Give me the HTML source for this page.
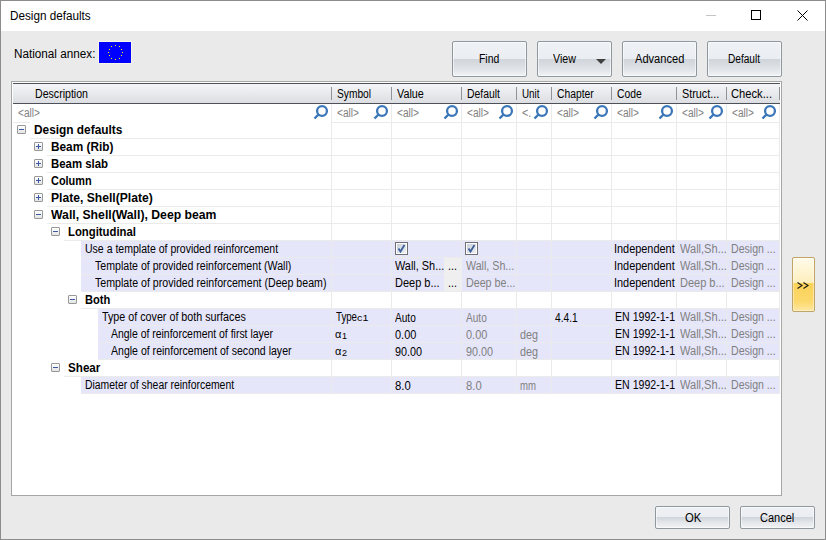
<!DOCTYPE html>
<html><head><meta charset="utf-8"><style>
html,body{margin:0;padding:0;width:826px;height:540px;overflow:hidden;background:#eaeaea}
body div, body svg{position:absolute}
.t{white-space:nowrap;font-family:"Liberation Sans", sans-serif}
.btn{border:1px solid #8f989e;border-radius:2px;box-sizing:border-box;box-shadow:inset 0 0 0 1px rgba(255,255,255,.55)}
.exp{width:9px;height:9px;box-sizing:border-box;border:1px solid #989898;border-radius:1px;background:linear-gradient(#fff,#e4e4e4)}
</style></head><body>
<div style="left:0px;top:0px;width:826px;height:540px;background:#eaeaea"></div>
<div style="left:0px;top:0px;width:826px;height:31px;background:#fff"></div>
<div style="left:0px;top:0px;width:826px;height:1px;background:#8c8c8c"></div>
<div style="left:0px;top:539px;width:826px;height:1px;background:#8c8c8c"></div>
<div style="left:0px;top:0px;width:1px;height:540px;background:#8c8c8c"></div>
<div style="left:825px;top:0px;width:1px;height:540px;background:#8c8c8c"></div>
<div class="t" style="left:10.00px;top:9px;color:#000;font-size:12px;line-height:14px;transform:scaleX(0.9759);transform-origin:0 0;">Design defaults</div>
<div style="left:706px;top:15px;width:10px;height:1px;background:#c4c4c4"></div>
<div style="left:751px;top:10px;width:10px;height:10px;border:1px solid #000;box-sizing:border-box"></div>
<svg style="position:absolute;left:797px;top:10px" width="11" height="11"><path d="M0.5 0.5 L10.5 10.5 M10.5 0.5 L0.5 10.5" stroke="#000" stroke-width="1"/></svg>
<div class="t" style="left:14.00px;top:47px;color:#000;font-size:12px;line-height:14px;transform:scaleX(0.9759);transform-origin:0 0;">National annex:</div>
<div style="left:98px;top:41px;width:34px;height:23px;background:#f6f6ea"></div>
<div style="left:99px;top:42px;width:32px;height:21px;background:#0000ff"></div>
<svg style="position:absolute;left:99px;top:42px" width="32" height="21"><rect x="16" y="3" width="1" height="1" fill="#ffff00"/><rect x="12" y="4" width="1" height="1" fill="#ffff00"/><rect x="20" y="4" width="1" height="1" fill="#ffff00"/><rect x="10" y="7" width="1" height="1" fill="#ffff00"/><rect x="22" y="7" width="1" height="1" fill="#ffff00"/><rect x="9" y="10" width="1" height="1" fill="#ffff00"/><rect x="23" y="10" width="1" height="1" fill="#ffff00"/><rect x="10" y="13" width="1" height="1" fill="#ffff00"/><rect x="22" y="13" width="1" height="1" fill="#ffff00"/><rect x="12" y="16" width="1" height="1" fill="#ffff00"/><rect x="20" y="16" width="1" height="1" fill="#ffff00"/><rect x="16" y="17" width="1" height="1" fill="#ffff00"/></svg>
<div class="btn" style="left:452px;top:41px;width:75px;height:36px;background:linear-gradient(to bottom,#eff1f5 0,#eaedf1 17px,#cfd4da 17px,#e2e5e9 28px,#f1f3f5 100%)"></div>
<div class="t" style="left:479.00px;top:52px;color:#000;font-size:12px;line-height:14px;transform:scaleX(0.8696);transform-origin:0 0;">Find</div>
<div class="btn" style="left:537px;top:41px;width:75px;height:36px;background:linear-gradient(to bottom,#eff1f5 0,#eaedf1 17px,#cfd4da 17px,#e2e5e9 28px,#f1f3f5 100%)"></div>
<div class="t" style="left:553.00px;top:52px;color:#000;font-size:12px;line-height:14px;transform:scaleX(0.8846);transform-origin:0 0;">View</div>
<svg style="position:absolute;left:596px;top:59px" width="10" height="5"><path d="M0 0 L10 0 L5 5 Z" fill="#404040"/></svg>
<div class="btn" style="left:622px;top:41px;width:75px;height:36px;background:linear-gradient(to bottom,#eff1f5 0,#eaedf1 17px,#cfd4da 17px,#e2e5e9 28px,#f1f3f5 100%)"></div>
<div class="t" style="left:635.00px;top:52px;color:#000;font-size:12px;line-height:14px;transform:scaleX(0.9245);transform-origin:0 0;">Advanced</div>
<div class="btn" style="left:707px;top:41px;width:75px;height:36px;background:linear-gradient(to bottom,#eff1f5 0,#eaedf1 17px,#cfd4da 17px,#e2e5e9 28px,#f1f3f5 100%)"></div>
<div class="t" style="left:728.00px;top:52px;color:#000;font-size:12px;line-height:14px;transform:scaleX(0.8421);transform-origin:0 0;">Default</div>
<div class="btn" style="left:655px;top:506px;width:75px;height:23px;background:linear-gradient(to bottom,#eff1f5 0,#eaedf1 10px,#cfd4da 10px,#e2e5e9 15px,#f1f3f5 100%)"></div>
<div class="t" style="left:685.00px;top:511px;color:#000;font-size:12px;line-height:14px;transform:scaleX(0.9412);transform-origin:0 0;">OK</div>
<div class="btn" style="left:740px;top:506px;width:75px;height:23px;background:linear-gradient(to bottom,#eff1f5 0,#eaedf1 10px,#cfd4da 10px,#e2e5e9 15px,#f1f3f5 100%)"></div>
<div class="t" style="left:760.00px;top:511px;color:#000;font-size:12px;line-height:14px;transform:scaleX(0.9189);transform-origin:0 0;">Cancel</div>
<div class="btn" style="left:792px;top:257px;width:23px;height:55px;border-color:#c2a466;border-radius:2px;box-shadow:inset 0 0 0 1px rgba(255,255,255,.4);background:linear-gradient(to bottom,#fffbea 0,#fdeebc 25px,#fbd257 25px,#fcd96e 44px,#fde8a4 100%)"></div>
<svg style="position:absolute;left:792px;top:277px" width="23" height="16"><path d="M5.5 5.5 L10 8.5 L5.5 11.5 M11.5 5.5 L16 8.5 L11.5 11.5" fill="none" stroke="#1a1a1a" stroke-width="1.15"/></svg>
<div style="left:11px;top:81px;width:771px;height:415px;background:#fff;border:1px solid #a6a6a6;box-sizing:border-box"></div>
<div style="left:13px;top:83px;width:767px;height:1px;background:#4d525a"></div>
<div style="left:13px;top:84px;width:767px;height:19px;background:linear-gradient(to bottom,#f4f5f7,#dcdee2)"></div>
<div style="left:13px;top:103px;width:767px;height:1px;background:#4d525a"></div>
<div style="left:331px;top:87px;width:1px;height:13px;background:#8e939a"></div>
<div style="left:391px;top:87px;width:1px;height:13px;background:#8e939a"></div>
<div style="left:461px;top:87px;width:1px;height:13px;background:#8e939a"></div>
<div style="left:516px;top:87px;width:1px;height:13px;background:#8e939a"></div>
<div style="left:551px;top:87px;width:1px;height:13px;background:#8e939a"></div>
<div style="left:611px;top:87px;width:1px;height:13px;background:#8e939a"></div>
<div style="left:676px;top:87px;width:1px;height:13px;background:#8e939a"></div>
<div style="left:726px;top:87px;width:1px;height:13px;background:#8e939a"></div>
<div style="left:779px;top:87px;width:1px;height:13px;background:#8e939a"></div>
<div class="t" style="left:35.00px;top:87px;color:#000;font-size:12px;line-height:14px;transform:scaleX(0.8833);transform-origin:0 0;">Description</div>
<div class="t" style="left:337.00px;top:87px;color:#000;font-size:12px;line-height:14px;transform:scaleX(0.8500);transform-origin:0 0;">Symbol</div>
<div class="t" style="left:397.00px;top:87px;color:#000;font-size:12px;line-height:14px;transform:scaleX(0.9000);transform-origin:0 0;">Value</div>
<div class="t" style="left:467.00px;top:87px;color:#000;font-size:12px;line-height:14px;transform:scaleX(0.8684);transform-origin:0 0;">Default</div>
<div class="t" style="left:522.00px;top:87px;color:#000;font-size:12px;line-height:14px;transform:scaleX(0.8182);transform-origin:0 0;">Unit</div>
<div class="t" style="left:557.00px;top:87px;color:#000;font-size:12px;line-height:14px;transform:scaleX(0.8605);transform-origin:0 0;">Chapter</div>
<div class="t" style="left:617.00px;top:87px;color:#000;font-size:12px;line-height:14px;transform:scaleX(0.8621);transform-origin:0 0;">Code</div>
<div class="t" style="left:682.00px;top:87px;color:#000;font-size:12px;line-height:14px;transform:scaleX(0.9024);transform-origin:0 0;">Struct...</div>
<div class="t" style="left:731.00px;top:87px;color:#000;font-size:12px;line-height:14px;transform:scaleX(0.9318);transform-origin:0 0;">Check...</div>
<div class="t" style="left:18.00px;top:106px;color:#808080;font-size:12px;line-height:14px;transform:scaleX(0.8462);transform-origin:0 0;">&lt;all&gt;</div>
<svg style="position:absolute;left:313px;top:104px" width="18" height="16"><circle cx="9" cy="7" r="4.9" fill="none" stroke="#3a76b8" stroke-width="2.3"/><path d="M1.5 14.5 L5.5 10.5" stroke="#3a76b8" stroke-width="2.4"/></svg>
<div class="t" style="left:337.00px;top:106px;color:#808080;font-size:12px;line-height:14px;transform:scaleX(0.8462);transform-origin:0 0;">&lt;all&gt;</div>
<svg style="position:absolute;left:373px;top:104px" width="18" height="16"><circle cx="9" cy="7" r="4.9" fill="none" stroke="#3a76b8" stroke-width="2.3"/><path d="M1.5 14.5 L5.5 10.5" stroke="#3a76b8" stroke-width="2.4"/></svg>
<div class="t" style="left:397.00px;top:106px;color:#808080;font-size:12px;line-height:14px;transform:scaleX(0.8462);transform-origin:0 0;">&lt;all&gt;</div>
<svg style="position:absolute;left:443px;top:104px" width="18" height="16"><circle cx="9" cy="7" r="4.9" fill="none" stroke="#3a76b8" stroke-width="2.3"/><path d="M1.5 14.5 L5.5 10.5" stroke="#3a76b8" stroke-width="2.4"/></svg>
<div class="t" style="left:467.00px;top:106px;color:#808080;font-size:12px;line-height:14px;transform:scaleX(0.8462);transform-origin:0 0;">&lt;all&gt;</div>
<svg style="position:absolute;left:498px;top:104px" width="18" height="16"><circle cx="9" cy="7" r="4.9" fill="none" stroke="#3a76b8" stroke-width="2.3"/><path d="M1.5 14.5 L5.5 10.5" stroke="#3a76b8" stroke-width="2.4"/></svg>
<div class="t" style="left:522.00px;top:106px;color:#808080;font-size:12px;line-height:14px;transform:scaleX(0.9000);transform-origin:0 0;">&lt;.</div>
<svg style="position:absolute;left:533px;top:104px" width="18" height="16"><circle cx="9" cy="7" r="4.9" fill="none" stroke="#3a76b8" stroke-width="2.3"/><path d="M1.5 14.5 L5.5 10.5" stroke="#3a76b8" stroke-width="2.4"/></svg>
<div class="t" style="left:557.00px;top:106px;color:#808080;font-size:12px;line-height:14px;transform:scaleX(0.8462);transform-origin:0 0;">&lt;all&gt;</div>
<svg style="position:absolute;left:593px;top:104px" width="18" height="16"><circle cx="9" cy="7" r="4.9" fill="none" stroke="#3a76b8" stroke-width="2.3"/><path d="M1.5 14.5 L5.5 10.5" stroke="#3a76b8" stroke-width="2.4"/></svg>
<div class="t" style="left:617.00px;top:106px;color:#808080;font-size:12px;line-height:14px;transform:scaleX(0.8462);transform-origin:0 0;">&lt;all&gt;</div>
<svg style="position:absolute;left:658px;top:104px" width="18" height="16"><circle cx="9" cy="7" r="4.9" fill="none" stroke="#3a76b8" stroke-width="2.3"/><path d="M1.5 14.5 L5.5 10.5" stroke="#3a76b8" stroke-width="2.4"/></svg>
<div class="t" style="left:682.00px;top:106px;color:#808080;font-size:12px;line-height:14px;transform:scaleX(0.8462);transform-origin:0 0;">&lt;all&gt;</div>
<svg style="position:absolute;left:708px;top:104px" width="18" height="16"><circle cx="9" cy="7" r="4.9" fill="none" stroke="#3a76b8" stroke-width="2.3"/><path d="M1.5 14.5 L5.5 10.5" stroke="#3a76b8" stroke-width="2.4"/></svg>
<div class="t" style="left:732.00px;top:106px;color:#808080;font-size:12px;line-height:14px;transform:scaleX(0.8462);transform-origin:0 0;">&lt;all&gt;</div>
<svg style="position:absolute;left:761px;top:104px" width="18" height="16"><circle cx="9" cy="7" r="4.9" fill="none" stroke="#3a76b8" stroke-width="2.3"/><path d="M1.5 14.5 L5.5 10.5" stroke="#3a76b8" stroke-width="2.4"/></svg>
<div style="left:13px;top:122px;width:17px;height:1px;background:#ebebeb"></div>
<div style="left:332px;top:122px;width:447px;height:1px;background:#ebebeb"></div>
<div style="left:30px;top:138px;width:749px;height:1px;background:#ebebeb"></div>
<div class="exp" style="left:17px;top:125px"></div>
<div style="left:19px;top:129px;width:5px;height:1px;background:#3b5aa3"></div>
<div class="t" style="left:34.00px;top:123px;color:#000;font-size:12px;line-height:14px;font-weight:bold;transform:scaleX(0.9888);transform-origin:0 0;">Design defaults</div>
<div style="left:47px;top:155px;width:732px;height:1px;background:#ebebeb"></div>
<div class="exp" style="left:34px;top:142px"></div>
<div style="left:36px;top:146px;width:5px;height:1px;background:#3b5aa3"></div>
<div style="left:38px;top:144px;width:1px;height:5px;background:#3b5aa3"></div>
<div class="t" style="left:51.00px;top:140px;color:#000;font-size:12px;line-height:14px;font-weight:bold;transform:scaleX(0.9841);transform-origin:0 0;">Beam (Rib)</div>
<div style="left:47px;top:172px;width:732px;height:1px;background:#ebebeb"></div>
<div class="exp" style="left:34px;top:159px"></div>
<div style="left:36px;top:163px;width:5px;height:1px;background:#3b5aa3"></div>
<div style="left:38px;top:161px;width:1px;height:5px;background:#3b5aa3"></div>
<div class="t" style="left:51.00px;top:157px;color:#000;font-size:12px;line-height:14px;font-weight:bold;transform:scaleX(0.9500);transform-origin:0 0;">Beam slab</div>
<div style="left:47px;top:189px;width:732px;height:1px;background:#ebebeb"></div>
<div class="exp" style="left:34px;top:176px"></div>
<div style="left:36px;top:180px;width:5px;height:1px;background:#3b5aa3"></div>
<div style="left:38px;top:178px;width:1px;height:5px;background:#3b5aa3"></div>
<div class="t" style="left:51.00px;top:174px;color:#000;font-size:12px;line-height:14px;font-weight:bold;transform:scaleX(0.9091);transform-origin:0 0;">Column</div>
<div style="left:47px;top:206px;width:732px;height:1px;background:#ebebeb"></div>
<div class="exp" style="left:34px;top:193px"></div>
<div style="left:36px;top:197px;width:5px;height:1px;background:#3b5aa3"></div>
<div style="left:38px;top:195px;width:1px;height:5px;background:#3b5aa3"></div>
<div class="t" style="left:51.00px;top:191px;color:#000;font-size:12px;line-height:14px;font-weight:bold;transform:scaleX(1.0099);transform-origin:0 0;">Plate, Shell(Plate)</div>
<div style="left:47px;top:223px;width:732px;height:1px;background:#ebebeb"></div>
<div class="exp" style="left:34px;top:210px"></div>
<div style="left:36px;top:214px;width:5px;height:1px;background:#3b5aa3"></div>
<div class="t" style="left:51.00px;top:208px;color:#000;font-size:12px;line-height:14px;font-weight:bold;transform:scaleX(1.0185);transform-origin:0 0;">Wall, Shell(Wall), Deep beam</div>
<div style="left:64px;top:240px;width:715px;height:1px;background:#ebebeb"></div>
<div class="exp" style="left:51px;top:227px"></div>
<div style="left:53px;top:231px;width:5px;height:1px;background:#3b5aa3"></div>
<div class="t" style="left:68.00px;top:225px;color:#000;font-size:12px;line-height:14px;font-weight:bold;transform:scaleX(0.9444);transform-origin:0 0;">Longitudinal</div>
<div style="left:81px;top:241px;width:698px;height:16px;background:#e6e6fa"></div>
<div style="left:81px;top:257px;width:698px;height:1px;background:#ebebeb"></div>
<div class="t" style="left:85.00px;top:242px;color:#000;font-size:12px;line-height:14px;transform:scaleX(0.8773);transform-origin:0 0;">Use a template of provided reinforcement</div>
<div style="left:81px;top:258px;width:698px;height:16px;background:#e6e6fa"></div>
<div style="left:81px;top:274px;width:698px;height:1px;background:#ebebeb"></div>
<div class="t" style="left:95.00px;top:259px;color:#000;font-size:12px;line-height:14px;transform:scaleX(0.8829);transform-origin:0 0;">Template of provided reinforcement (Wall)</div>
<div style="left:81px;top:275px;width:698px;height:16px;background:#e6e6fa"></div>
<div style="left:81px;top:291px;width:698px;height:1px;background:#ebebeb"></div>
<div class="t" style="left:95.00px;top:276px;color:#000;font-size:12px;line-height:14px;transform:scaleX(0.8851);transform-origin:0 0;">Template of provided reinforcement (Deep beam)</div>
<div style="left:81px;top:308px;width:698px;height:1px;background:#ebebeb"></div>
<div class="exp" style="left:68px;top:295px"></div>
<div style="left:70px;top:299px;width:5px;height:1px;background:#3b5aa3"></div>
<div class="t" style="left:85.00px;top:293px;color:#000;font-size:12px;line-height:14px;font-weight:bold;transform:scaleX(0.9259);transform-origin:0 0;">Both</div>
<div style="left:98px;top:309px;width:681px;height:16px;background:#e6e6fa"></div>
<div style="left:98px;top:325px;width:681px;height:1px;background:#ebebeb"></div>
<div class="t" style="left:102.00px;top:310px;color:#000;font-size:12px;line-height:14px;transform:scaleX(0.8944);transform-origin:0 0;">Type of cover of both surfaces</div>
<div style="left:98px;top:326px;width:681px;height:16px;background:#e6e6fa"></div>
<div style="left:98px;top:342px;width:681px;height:1px;background:#ebebeb"></div>
<div class="t" style="left:111.00px;top:327px;color:#000;font-size:12px;line-height:14px;transform:scaleX(0.8710);transform-origin:0 0;">Angle of reinforcement of first layer</div>
<div style="left:98px;top:343px;width:681px;height:16px;background:#e6e6fa"></div>
<div style="left:98px;top:359px;width:681px;height:1px;background:#ebebeb"></div>
<div class="t" style="left:111.00px;top:344px;color:#000;font-size:12px;line-height:14px;transform:scaleX(0.8786);transform-origin:0 0;">Angle of reinforcement of second layer</div>
<div style="left:64px;top:376px;width:715px;height:1px;background:#ebebeb"></div>
<div class="exp" style="left:51px;top:363px"></div>
<div style="left:53px;top:367px;width:5px;height:1px;background:#3b5aa3"></div>
<div class="t" style="left:68.00px;top:361px;color:#000;font-size:12px;line-height:14px;font-weight:bold;transform:scaleX(0.9706);transform-origin:0 0;">Shear</div>
<div style="left:81px;top:377px;width:698px;height:16px;background:#e6e6fa"></div>
<div style="left:81px;top:393px;width:698px;height:1px;background:#ebebeb"></div>
<div class="t" style="left:85.00px;top:378px;color:#000;font-size:12px;line-height:14px;transform:scaleX(0.8663);transform-origin:0 0;">Diameter of shear reinforcement</div>
<div style="left:331px;top:104px;width:1px;height:290px;background:#eaeaea"></div>
<div style="left:391px;top:104px;width:1px;height:290px;background:#eaeaea"></div>
<div style="left:461px;top:104px;width:1px;height:290px;background:#eaeaea"></div>
<div style="left:516px;top:104px;width:1px;height:290px;background:#eaeaea"></div>
<div style="left:551px;top:104px;width:1px;height:290px;background:#eaeaea"></div>
<div style="left:611px;top:104px;width:1px;height:290px;background:#eaeaea"></div>
<div style="left:676px;top:104px;width:1px;height:290px;background:#eaeaea"></div>
<div style="left:726px;top:104px;width:1px;height:290px;background:#eaeaea"></div>
<div style="left:779px;top:104px;width:1px;height:290px;background:#eaeaea"></div>
<div style="left:395px;top:242px;width:13px;height:13px;box-sizing:border-box;border:1px solid #707070;background:#fff"></div>
<div style="left:397px;top:244px;width:9px;height:9px;background:linear-gradient(135deg,#c9d0d8,#eef1f4)"></div>
<svg style="position:absolute;left:395px;top:242px" width="13" height="13"><path d="M3.5 6.5 L5.5 9.5 L9.5 3" fill="none" stroke="#3e5f9a" stroke-width="1.8"/></svg>
<div style="left:465px;top:242px;width:13px;height:13px;box-sizing:border-box;border:1px solid #707070;background:#fff"></div>
<div style="left:467px;top:244px;width:9px;height:9px;background:linear-gradient(135deg,#c9d0d8,#eef1f4)"></div>
<svg style="position:absolute;left:465px;top:242px" width="13" height="13"><path d="M3.5 6.5 L5.5 9.5 L9.5 3" fill="none" stroke="#3e5f9a" stroke-width="1.8"/></svg>
<div class="t" style="left:614.09px;top:242px;color:#000;font-size:12px;line-height:14px;transform:scaleX(0.9091);transform-origin:0 0;">Independent</div>
<div class="t" style="left:731.00px;top:242px;color:#808080;font-size:12px;line-height:14px;transform:scaleX(0.8800);transform-origin:0 0;">Design ...</div>
<div class="t" style="left:614.09px;top:259px;color:#000;font-size:12px;line-height:14px;transform:scaleX(0.9091);transform-origin:0 0;">Independent</div>
<div class="t" style="left:731.00px;top:259px;color:#808080;font-size:12px;line-height:14px;transform:scaleX(0.8800);transform-origin:0 0;">Design ...</div>
<div class="t" style="left:614.09px;top:276px;color:#000;font-size:12px;line-height:14px;transform:scaleX(0.9091);transform-origin:0 0;">Independent</div>
<div class="t" style="left:731.00px;top:276px;color:#808080;font-size:12px;line-height:14px;transform:scaleX(0.8800);transform-origin:0 0;">Design ...</div>
<div class="t" style="left:680.00px;top:242px;color:#808080;font-size:12px;line-height:14px;transform:scaleX(0.9200);transform-origin:0 0;">Wall,Sh...</div>
<div class="t" style="left:680.00px;top:259px;color:#808080;font-size:12px;line-height:14px;transform:scaleX(0.9200);transform-origin:0 0;">Wall,Sh...</div>
<div class="t" style="left:680.00px;top:276px;color:#808080;font-size:12px;line-height:14px;transform:scaleX(0.9167);transform-origin:0 0;">Deep b...</div>
<div style="left:444px;top:258px;width:18px;height:33px;background:#efefef"></div>
<div class="t" style="left:395.00px;top:259px;color:#000;font-size:12px;line-height:14px;transform:scaleX(0.9074);transform-origin:0 0;">Wall, Sh...</div>
<div class="t" style="left:448.11px;top:259px;color:#000;font-size:12px;line-height:14px;transform:scaleX(0.8889);transform-origin:0 0;">...</div>
<div class="t" style="left:466.00px;top:259px;color:#808080;font-size:12px;line-height:14px;transform:scaleX(0.8889);transform-origin:0 0;">Wall, Sh...</div>
<div class="t" style="left:395.00px;top:276px;color:#000;font-size:12px;line-height:14px;transform:scaleX(0.9167);transform-origin:0 0;">Deep b...</div>
<div class="t" style="left:448.11px;top:276px;color:#000;font-size:12px;line-height:14px;transform:scaleX(0.8889);transform-origin:0 0;">...</div>
<div class="t" style="left:466.00px;top:276px;color:#808080;font-size:12px;line-height:14px;transform:scaleX(0.8909);transform-origin:0 0;">Deep be...</div>
<div class="t" style="left:615.00px;top:310px;color:#000;font-size:12px;line-height:14px;transform:scaleX(0.8824);transform-origin:0 0;">EN 1992-1-1</div>
<div class="t" style="left:680.00px;top:310px;color:#808080;font-size:12px;line-height:14px;transform:scaleX(0.9200);transform-origin:0 0;">Wall,Sh...</div>
<div class="t" style="left:731.00px;top:310px;color:#808080;font-size:12px;line-height:14px;transform:scaleX(0.8800);transform-origin:0 0;">Design ...</div>
<div class="t" style="left:615.00px;top:327px;color:#000;font-size:12px;line-height:14px;transform:scaleX(0.8824);transform-origin:0 0;">EN 1992-1-1</div>
<div class="t" style="left:680.00px;top:327px;color:#808080;font-size:12px;line-height:14px;transform:scaleX(0.9200);transform-origin:0 0;">Wall,Sh...</div>
<div class="t" style="left:731.00px;top:327px;color:#808080;font-size:12px;line-height:14px;transform:scaleX(0.8800);transform-origin:0 0;">Design ...</div>
<div class="t" style="left:615.00px;top:344px;color:#000;font-size:12px;line-height:14px;transform:scaleX(0.8824);transform-origin:0 0;">EN 1992-1-1</div>
<div class="t" style="left:680.00px;top:344px;color:#808080;font-size:12px;line-height:14px;transform:scaleX(0.9200);transform-origin:0 0;">Wall,Sh...</div>
<div class="t" style="left:731.00px;top:344px;color:#808080;font-size:12px;line-height:14px;transform:scaleX(0.8800);transform-origin:0 0;">Design ...</div>
<div class="t" style="left:615.00px;top:378px;color:#000;font-size:12px;line-height:14px;transform:scaleX(0.8824);transform-origin:0 0;">EN 1992-1-1</div>
<div class="t" style="left:680.00px;top:378px;color:#808080;font-size:12px;line-height:14px;transform:scaleX(0.9200);transform-origin:0 0;">Wall,Sh...</div>
<div class="t" style="left:731.00px;top:378px;color:#808080;font-size:12px;line-height:14px;transform:scaleX(0.8800);transform-origin:0 0;">Design ...</div>
<div class="t" style="left:336.00px;top:310px;color:#000;font-size:12px;line-height:14px;transform:scaleX(0.8077);transform-origin:0 0;">Type</div>
<div class="t" style="left:357.00px;top:313px;color:#000;font-size:9px;line-height:11px;transform:scaleX(1.2000);transform-origin:0 0;">c1</div>
<div class="t" style="left:335.00px;top:328px;color:#000;font-size:11px;line-height:13px;">&alpha;</div>
<div class="t" style="left:342.00px;top:331px;color:#000;font-size:9px;line-height:11px;">1</div>
<div class="t" style="left:335.00px;top:345px;color:#000;font-size:11px;line-height:13px;">&alpha;</div>
<div class="t" style="left:342.00px;top:348px;color:#000;font-size:9px;line-height:11px;">2</div>
<div class="t" style="left:395.00px;top:311px;color:#000;font-size:12px;line-height:14px;transform:scaleX(0.8400);transform-origin:0 0;">Auto</div>
<div class="t" style="left:466.00px;top:311px;color:#808080;font-size:12px;line-height:14px;transform:scaleX(0.8400);transform-origin:0 0;">Auto</div>
<div class="t" style="left:555.00px;top:311px;color:#000;font-size:12px;line-height:14px;transform:scaleX(0.8519);transform-origin:0 0;">4.4.1</div>
<div class="t" style="left:395.00px;top:328px;color:#000;font-size:12px;line-height:14px;transform:scaleX(0.9130);transform-origin:0 0;">0.00</div>
<div class="t" style="left:466.00px;top:328px;color:#808080;font-size:12px;line-height:14px;transform:scaleX(0.9130);transform-origin:0 0;">0.00</div>
<div class="t" style="left:520.00px;top:328px;color:#808080;font-size:12px;line-height:14px;transform:scaleX(0.9000);transform-origin:0 0;">deg</div>
<div class="t" style="left:395.00px;top:345px;color:#000;font-size:12px;line-height:14px;transform:scaleX(0.9000);transform-origin:0 0;">90.00</div>
<div class="t" style="left:466.00px;top:345px;color:#808080;font-size:12px;line-height:14px;transform:scaleX(0.9000);transform-origin:0 0;">90.00</div>
<div class="t" style="left:520.00px;top:345px;color:#808080;font-size:12px;line-height:14px;transform:scaleX(0.9000);transform-origin:0 0;">deg</div>
<div class="t" style="left:395.00px;top:379px;color:#000;font-size:12px;line-height:14px;transform:scaleX(0.9412);transform-origin:0 0;">8.0</div>
<div class="t" style="left:466.00px;top:379px;color:#808080;font-size:12px;line-height:14px;transform:scaleX(0.9412);transform-origin:0 0;">8.0</div>
<div class="t" style="left:520.00px;top:379px;color:#808080;font-size:12px;line-height:14px;transform:scaleX(0.8000);transform-origin:0 0;">mm</div>
</body></html>
